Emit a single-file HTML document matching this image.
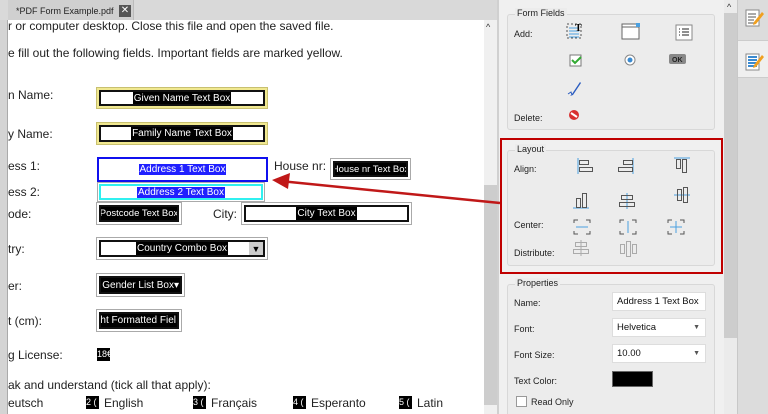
<!DOCTYPE html>
<html><head><meta charset="utf-8"><style>
*{margin:0;padding:0;box-sizing:border-box}
html,body{width:768px;height:414px;overflow:hidden}
body{background:#f0f0f0;font-family:"Liberation Sans",Arial,sans-serif;position:relative}
.a{position:absolute}
.t{font-size:12px;color:#222;white-space:nowrap}
.f{position:absolute;border:1px solid #aaa;background:#fff;padding:2px}
.f>div{border:2px solid #111;background:#fff;height:100%;display:flex;align-items:center;justify-content:center;font-size:10px;color:#fff;overflow:hidden;white-space:nowrap}
.f span{background:#000;padding:0 1px;line-height:13px;white-space:nowrap}
.y{background:#f0e890;border-color:#c8c070}
.s{font-size:9px;color:#222;white-space:nowrap}
.g{position:absolute;border:1px solid #d8d8d8;border-radius:3px;background:#ececec}
.gt{position:absolute;top:-7px;left:7px;background:#ececec;padding:0 2px;font-size:9px;color:#222}
.in{position:absolute;background:#fff;border:1px solid #ddd;font-size:9.5px;color:#111;padding:3px 4px;height:19px}
.cb{position:absolute;width:13px;height:13px;background:#000;color:#fff;font-size:9px;line-height:13px;overflow:hidden;white-space:nowrap}
</style></head><body>
<div class="a" style="left:0;top:0;width:498px;height:20px;background:#d9d9d9"></div>
<div class="a" style="left:8px;top:0;width:126px;height:20px;background:#d0d0d0;border-right:1px solid #bbb"></div>
<div class="a s" style="left:16px;top:6px;font-size:9px">*PDF Form Example.pdf</div>
<div class="a" style="left:119px;top:5px;width:12px;height:12px;background:#555;color:#fff;font-size:10px;line-height:12px;text-align:center">✕</div>
<div class="a" style="left:0;top:20px;width:8px;height:394px;background:#d4d4d4;border-right:1px solid #aaa"></div>
<div class="a" style="left:8px;top:20px;width:476px;height:394px;background:#fff"></div>
<div class="a" style="left:484px;top:20px;width:13px;height:394px;background:#f0f0f0"></div>
<div class="a" style="left:484px;top:185px;width:13px;height:220px;background:#cdcdcd"></div>
<div class="a" style="left:486px;top:22px;font-size:9px;color:#333">^</div>
<div class="a" style="left:497px;top:0;width:2px;height:414px;background:#d0d0d0"></div>
<div class="a t" style="left:8px;top:19px">r or computer desktop. Close this file and open the saved file.</div>
<div class="a t" style="left:8px;top:46px">e fill out the following fields. Important fields are marked yellow.</div>
<div class="a t" style="left:8px;top:88px">n Name:</div>
<div class="a t" style="left:8px;top:127px">y Name:</div>
<div class="a t" style="left:8px;top:159px">ess 1:</div>
<div class="a t" style="left:8px;top:185px">ess 2:</div>
<div class="a t" style="left:8px;top:207px">ode:</div>
<div class="a t" style="left:8px;top:242px">try:</div>
<div class="a t" style="left:8px;top:279px">er:</div>
<div class="a t" style="left:8px;top:314px">t (cm):</div>
<div class="a t" style="left:8px;top:348px">g License:</div>
<div class="a t" style="left:8px;top:378px">ak and understand (tick all that apply):</div>
<div class="a t" style="left:8px;top:396px">eutsch</div>
<div class="f y" style="left:96px;top:87px;width:172px;height:22px"><div><span>Given Name Text Box</span></div></div>
<div class="f y" style="left:96px;top:122px;width:172px;height:23px"><div><span>Family Name Text Box</span></div></div>
<div class="a" style="left:97px;top:157px;width:171px;height:25px;border:2px solid #1010ee;background:#fff;display:flex;align-items:center;justify-content:center;font-size:10px;color:#fff"><span style="background:#2020ff;padding:0 1px">Address 1 Text Box</span></div>
<div class="a" style="left:97px;top:182px;width:168px;height:20px;border:1px solid #aaa;background:#fff;padding:1px"><div style="border:2px solid #30f0f0;height:100%;display:flex;align-items:center;justify-content:center;font-size:10px;color:#fff"><span style="background:#2020ff;padding:0 1px">Address 2 Text Box</span></div></div>
<div class="a t" style="left:274px;top:159px">House nr:</div>
<div class="f" style="left:330px;top:158px;width:81px;height:22px"><div style="background:#000"><span style="font-size:9.5px">House nr Text Box</span></div></div>
<div class="f" style="left:96px;top:202px;width:86px;height:23px"><div style="background:#000"><span style="font-size:9.5px">Postcode Text Box</span></div></div>
<div class="a t" style="left:213px;top:207px">City:</div>
<div class="f" style="left:241px;top:202px;width:171px;height:23px"><div><span>City Text Box</span></div></div>
<div class="f" style="left:96px;top:237px;width:172px;height:23px"><div style="position:relative"><span>Country Combo Box</span><b style="position:absolute;right:0;top:0;bottom:0;width:14px;background:#ccc;color:#000;font-size:9px;text-align:center;line-height:15px">▼</b></div></div>
<div class="f" style="left:96px;top:273px;width:89px;height:24px"><div style="justify-content:flex-end"><span style="line-height:17px">Gender List Box▾</span></div></div>
<div class="f" style="left:96px;top:309px;width:86px;height:23px"><div style="background:#000;justify-content:flex-end"><span>eight Formatted Fiel</span></div></div>
<div class="cb" style="left:97px;top:348px">18€</div>
<div class="cb" style="left:86px;top:396px">2 (</div><div class="a t" style="left:104px;top:396px">English</div>
<div class="cb" style="left:193px;top:396px">3 (</div><div class="a t" style="left:211px;top:396px">Français</div>
<div class="cb" style="left:293px;top:396px">4 (</div><div class="a t" style="left:311px;top:396px">Esperanto</div>
<div class="cb" style="left:399px;top:396px">5 (</div><div class="a t" style="left:417px;top:396px">Latin</div>
<svg class="a" style="left:260px;top:170px" width="245" height="45"><line x1="240" y1="33" x2="20" y2="11" stroke="#c01818" stroke-width="2.5"/><polygon points="12,10 30,3 28,19" fill="#c01818"/></svg>
<div class="g" style="left:507px;top:14px;width:208px;height:116px"><div class="gt">Form Fields</div></div>
<div class="a s" style="left:514px;top:29px">Add:</div>
<div class="a s" style="left:514px;top:113px">Delete:</div>
<svg class="a" style="left:566px;top:22px" width="150" height="105">
<rect x="1" y="2" width="14" height="14" fill="none" stroke="#555" stroke-dasharray="2 2"/><path d="M3 6h10M3 9h10M3 12h10M3 15h10" stroke="#4aa0e0"/><text x="9" y="9" font-size="10" font-weight="bold" font-family="Liberation Serif">T</text>
<rect x="56" y="2" width="17" height="15" fill="#fff" stroke="#666"/><path d="M56 5h17" stroke="#666"/><rect x="70" y="1" width="4" height="4" fill="#4aa0e0"/>
<rect x="110" y="3" width="16" height="15" fill="#fff" stroke="#888"/><path d="M113 7h1M116 7h7M113 10h1M116 10h7M113 13h1M116 13h7" stroke="#222"/>
<rect x="4" y="33" width="11" height="11" fill="#fff" stroke="#777"/><path d="M6 38l3 3 6-6" stroke="#3a3" stroke-width="2" fill="none"/>
<circle cx="64" cy="38" r="5" fill="#fff" stroke="#888"/><circle cx="64" cy="38" r="2.5" fill="#3a8ad0"/>
<rect x="103" y="32" width="17" height="10" rx="2" fill="#888"/><text x="106" y="40" font-size="7" font-weight="bold" fill="#222">OK</text>
<path d="M14 60l-8 12-2 2 3-1 8-12z" fill="#2a5cc0"/><path d="M2 72l3-2 1 3" stroke="#2a5cc0" fill="none"/>
<circle cx="8" cy="93" r="5" fill="#d83030"/><path d="M5 91l6 4" stroke="#fff" stroke-width="2"/>
</svg>
<div class="a" style="left:500px;top:138px;width:223px;height:136px;border:2px solid #c00000"></div>
<div class="g" style="left:507px;top:150px;width:208px;height:116px"><div class="gt">Layout</div></div>
<div class="a s" style="left:514px;top:164px">Align:</div>
<div class="a s" style="left:514px;top:220px">Center:</div>
<div class="a s" style="left:514px;top:248px">Distribute:</div>
<svg class="a" style="left:570px;top:155px" width="130" height="110" fill="none" stroke="#555">
<path d="M8 3v16" stroke="#4aa0e0"/><rect x="9.5" y="5.5" width="9" height="4"/><rect x="9.5" y="12.5" width="13" height="4"/>
<path d="M63 3v16" stroke="#4aa0e0"/><rect x="53.5" y="5.5" width="9" height="4"/><rect x="48.5" y="12.5" width="14" height="4"/>
<path d="M104 3h16" stroke="#4aa0e0"/><rect x="106.5" y="4.5" width="4" height="9"/><rect x="112.5" y="4.5" width="4" height="13"/>
<path d="M3 53h16" stroke="#4aa0e0"/><rect x="6.5" y="43.5" width="4" height="9"/><rect x="12.5" y="38.5" width="4" height="14"/>
<path d="M57 38v16" stroke="#4aa0e0"/><rect x="51.5" y="40.5" width="11" height="4"/><rect x="49.5" y="47.5" width="15" height="4"/>
<path d="M104 40h16" stroke="#4aa0e0"/><rect x="107.5" y="34.5" width="4" height="11"/><rect x="113.5" y="32.5" width="4" height="15"/>
<path d="M4 68v-3h4M16 65h4v3M4 76v3h4M16 79h4v-3"/><path d="M6 72h12" stroke="#4aa0e0"/>
<path d="M50 68v-3h4M62 65h4v3M50 76v3h4M62 79h4v-3"/><path d="M58 66v12" stroke="#4aa0e0"/>
<path d="M98 68v-3h4M110 65h4v3M98 76v3h4M110 79h4v-3"/><path d="M106 66v12M100 72h12" stroke="#4aa0e0"/>
<g stroke="#aaa"><rect x="5.5" y="87.5" width="11" height="4"/><rect x="3.5" y="94.5" width="15" height="4"/><path d="M11 85v16"/>
<rect x="50.5" y="89.5" width="4" height="9"/><rect x="56.5" y="86.5" width="4" height="15"/><rect x="62.5" y="89.5" width="4" height="9"/></g>
</svg>
<div class="g" style="left:507px;top:284px;width:208px;height:140px"><div class="gt">Properties</div></div>
<div class="a s" style="left:514px;top:298px">Name:</div>
<div class="in" style="left:612px;top:292px;width:94px">Address 1 Text Box</div>
<div class="a s" style="left:514px;top:324px">Font:</div>
<div class="in" style="left:612px;top:318px;width:94px">Helvetica<span style="position:absolute;right:5px;font-size:7px;color:#555;top:5px">▼</span></div>
<div class="a s" style="left:514px;top:350px">Font Size:</div>
<div class="in" style="left:612px;top:344px;width:94px">10.00<span style="position:absolute;right:5px;font-size:7px;color:#555;top:5px">▼</span></div>
<div class="a s" style="left:514px;top:376px">Text Color:</div>
<div class="a" style="left:612px;top:371px;width:41px;height:16px;background:#000;border:1px solid #666"></div>
<div class="a" style="left:516px;top:396px;width:11px;height:11px;background:#fff;border:1px solid #999"></div>
<div class="a s" style="left:531px;top:397px">Read Only</div>
<div class="a" style="left:724px;top:0;width:13px;height:414px;background:#ebebeb"></div>
<div class="a" style="left:724px;top:13px;width:13px;height:325px;background:#cdcdcd"></div>
<div class="a" style="left:727px;top:2px;font-size:9px;color:#333">^</div>
<div class="a" style="left:737px;top:0;width:31px;height:414px;background:#dcdcdc;border-left:1px solid #c8c8c8"></div>
<div class="a" style="left:738px;top:40px;width:30px;height:38px;background:#efefef;border-top:1px solid #ccc;border-bottom:1px solid #ccc"></div>
<svg class="a" style="left:745px;top:8px" width="20" height="65"><rect x="1" y="2" width="13" height="16" fill="#fff" stroke="#888"/><path d="M3 6h8M3 9h8M3 12h6M3 15h6" stroke="#555"/><path d="M17 4l-8 10-1 3 3-1 8-10z" fill="#f0a020"/>
<rect x="1" y="46" width="13" height="16" fill="#fff" stroke="#888"/><path d="M3 49h9M3 52h9M3 55h9M3 58h9" stroke="#3a8ad0" stroke-width="2"/><path d="M17 47l-8 10-1 3 3-1 8-10z" fill="#f0a020"/></svg>
</body></html>
